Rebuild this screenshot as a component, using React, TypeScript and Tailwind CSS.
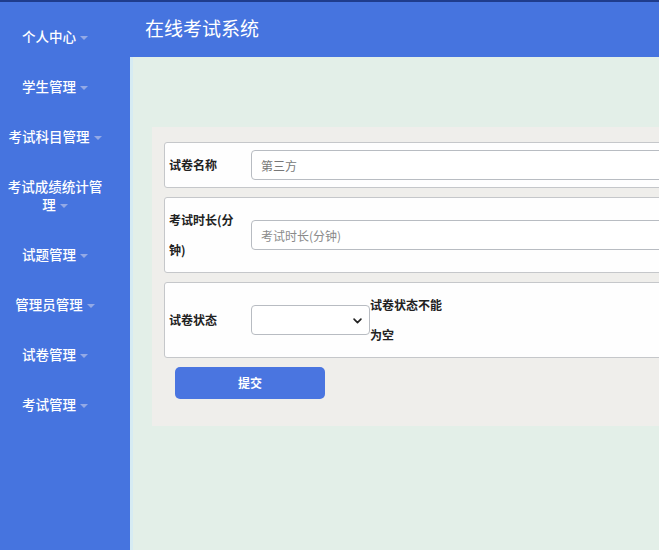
const menus = [
  "个人中心",
  "学生管理",
  "考试科目管理",
  "考试成绩统计管理",
  "试题管理",
  "管理员管理",
  "试卷管理",
  "考试管理",
];

function Caret() {
  return (
    <span className="ml-[4px] inline-block h-0 w-0 border-x-[4px] border-t-[4px] border-x-transparent border-t-[#93a9e6] align-middle" />
  );
}

export default function App() {
  const font = { fontFamily: '"Noto Sans CJK SC", "Noto Sans", sans-serif' };

  return (
    <div
      className="flex h-[550px] w-full overflow-hidden border-t-2 border-[#1f3c8c] bg-[#4674df]"
      style={font}
    >
      <aside className="flex w-[130px] shrink-0 flex-col pt-[9px]">
        {menus.map((m) => (
          <div
            key={m}
            className="py-[16px] pr-[22px] pl-[2px] text-center text-[13.5px] font-medium leading-[18px] text-white"
          >
            {m}
            <Caret />
          </div>
        ))}
      </aside>

      <div className="flex min-w-0 flex-1 flex-col">
        <header className="flex h-[55px] shrink-0 items-center pb-[3px] pl-[15px]">
          <h1 className="text-[19px] font-normal text-white">在线考试系统</h1>
        </header>

        <main className="flex-1 overflow-hidden border-l-[3px] border-[#d6ebf3] bg-[#e3efe8] pt-[70px] pl-[19px]">
          <div className="w-[640px] bg-[#efeeeb] pt-[15px] pl-[12px] pb-[27px]">
            <div className="flex flex-col gap-[9px]">
              <div className="flex items-center rounded-[3px] border border-[#c5c7ca] bg-[#fefefe] py-[7px] pl-[4px]">
                <label className="w-[82px] shrink-0 pr-[6px] text-[12px] font-bold leading-[30px] text-[#222]">
                  试卷名称
                </label>
                <input
                  defaultValue="第三方"
                  className="h-[30px] flex-1 rounded-[4px] border border-[#b8bcc2] bg-white px-[9px] text-[12px] text-[#777] outline-none"
                />
              </div>

              <div className="flex items-center rounded-[3px] border border-[#c5c7ca] bg-[#fefefe] py-[7px] pl-[4px]">
                <label className="w-[82px] shrink-0 pr-[6px] text-[12px] font-bold leading-[30px] text-[#222]">
                  考试时长(分钟)
                </label>
                <input
                  placeholder="考试时长(分钟)"
                  className="h-[30px] flex-1 rounded-[4px] border border-[#b8bcc2] bg-white px-[9px] text-[12px] text-[#777] outline-none placeholder:text-[#8a8a8a]"
                />
              </div>

              <div className="flex items-center rounded-[3px] border border-[#c5c7ca] bg-[#fefefe] py-[7px] pl-[4px]">
                <label className="w-[82px] shrink-0 pr-[6px] text-[12px] font-bold leading-[30px] text-[#222]">
                  试卷状态
                </label>
                <div className="flex h-[30px] w-[119px] shrink-0 items-center justify-end rounded-[4px] border border-[#b8bcc2] bg-white pr-[6px]">
                  <svg width="11" height="11" viewBox="0 0 16 16" fill="none">
                    <path
                      d="M3 6l5 5 5-5"
                      stroke="#222"
                      strokeWidth="2.4"
                      strokeLinecap="round"
                      strokeLinejoin="round"
                    />
                  </svg>
                </div>
                <span className="w-[74px] text-[12px] font-bold leading-[30px] text-[#222]">
                  试卷状态不能为空
                </span>
              </div>
            </div>

            <button className="mt-[9px] ml-[11px] h-[32px] w-[150px] rounded-[5px] bg-[#4a75e0] text-[12px] font-bold text-white">
              提交
            </button>
          </div>
        </main>
      </div>
    </div>
  );
}
